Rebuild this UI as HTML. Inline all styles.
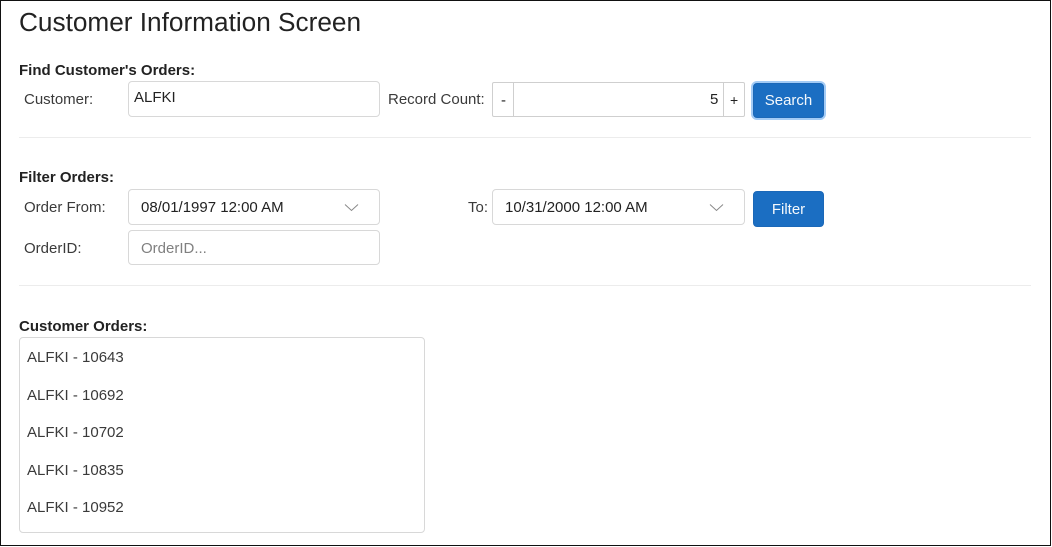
<!DOCTYPE html>
<html>
<head>
<meta charset="utf-8">
<style>
html,body{margin:0;padding:0;background:#fff;}
body{width:1052px;height:547px;position:relative;overflow:hidden;font-family:"Liberation Sans",Arial,sans-serif;font-size:15px;color:#3a3a3a;}
.frame{position:absolute;left:0;top:0;width:1049px;height:544px;border:1px solid #111;}
.a{position:absolute;white-space:nowrap;line-height:20px;}
.b{font-weight:bold;color:#222;}
.box{position:absolute;box-sizing:border-box;background:#fff;border:1px solid #d8d8d8;border-radius:4px;}
.hr{position:absolute;left:19px;width:1012px;height:1px;background:#ececec;}
.btn{position:absolute;box-sizing:border-box;background:#1b6ec2;color:#f4f8fc;border-radius:4px;text-align:center;border:1px solid #1b68b8;}
svg{position:absolute;}
</style>
</head>
<body>
<div class="frame"></div>
<div class="a" style="left:19px;top:8px;font-size:26.2px;line-height:28px;color:#222;">Customer Information Screen</div>

<div class="a b" style="left:19px;top:61px;">Find Customer's Orders:</div>
<div class="a" style="left:24px;top:90px;">Customer:</div>
<div class="box" style="left:128px;top:81px;width:252px;height:36px;"></div>
<div class="a" style="left:134px;top:88px;color:#222;">ALFKI</div>
<div class="a" style="left:388px;top:90px;">Record Count:</div>
<div class="box" style="left:492px;top:82px;width:253px;height:35px;border-radius:2px;border-color:#cfcfcf;"></div>
<div style="position:absolute;left:513px;top:82px;width:1px;height:35px;background:#cfcfcf;"></div>
<div style="position:absolute;left:723px;top:82px;width:1px;height:35px;background:#cfcfcf;"></div>
<div class="a" style="left:501px;top:91px;color:#222;">-</div>
<div class="a" style="left:710px;top:90px;color:#222;">5</div>
<div class="a" style="left:730px;top:90px;color:#222;font-size:14px;">+</div>
<div class="btn" style="left:753px;top:83px;width:71px;height:35px;line-height:34px;box-shadow:0 0 0 2px #a3cbf5;">Search</div>
<div class="hr" style="top:137px;"></div>

<div class="a b" style="left:19px;top:168px;">Filter Orders:</div>
<div class="a" style="left:24px;top:198px;">Order From:</div>
<div class="box" style="left:128px;top:189px;width:252px;height:36px;"></div>
<div class="a" style="left:141px;top:198px;color:#222;">08/01/1997 12:00 AM</div>
<svg style="left:344px;top:203px;" width="15" height="9" viewBox="0 0 15 9"><path d="M1 1.5 L7.5 7.5 L14 1.5" fill="none" stroke="#888" stroke-width="1"/></svg>
<div class="a" style="left:468px;top:198px;">To:</div>
<div class="box" style="left:492px;top:189px;width:253px;height:36px;"></div>
<div class="a" style="left:505px;top:198px;color:#222;">10/31/2000 12:00 AM</div>
<svg style="left:709px;top:203px;" width="15" height="9" viewBox="0 0 15 9"><path d="M1 1.5 L7.5 7.5 L14 1.5" fill="none" stroke="#888" stroke-width="1"/></svg>
<div class="btn" style="left:753px;top:191px;width:71px;height:36px;line-height:35px;">Filter</div>
<div class="a" style="left:24px;top:239px;">OrderID:</div>
<div class="box" style="left:128px;top:230px;width:252px;height:35px;"></div>
<div class="a" style="left:141px;top:239px;color:#808080;">OrderID...</div>
<div class="hr" style="top:285px;"></div>

<div class="a b" style="left:19px;top:317px;">Customer Orders:</div>
<div class="box" style="left:19px;top:337px;width:406px;height:196px;"></div>
<div class="a" style="left:27px;top:348px;">ALFKI - 10643</div>
<div class="a" style="left:27px;top:386px;">ALFKI - 10692</div>
<div class="a" style="left:27px;top:423px;">ALFKI - 10702</div>
<div class="a" style="left:27px;top:461px;">ALFKI - 10835</div>
<div class="a" style="left:27px;top:498px;">ALFKI - 10952</div>
</body>
</html>
